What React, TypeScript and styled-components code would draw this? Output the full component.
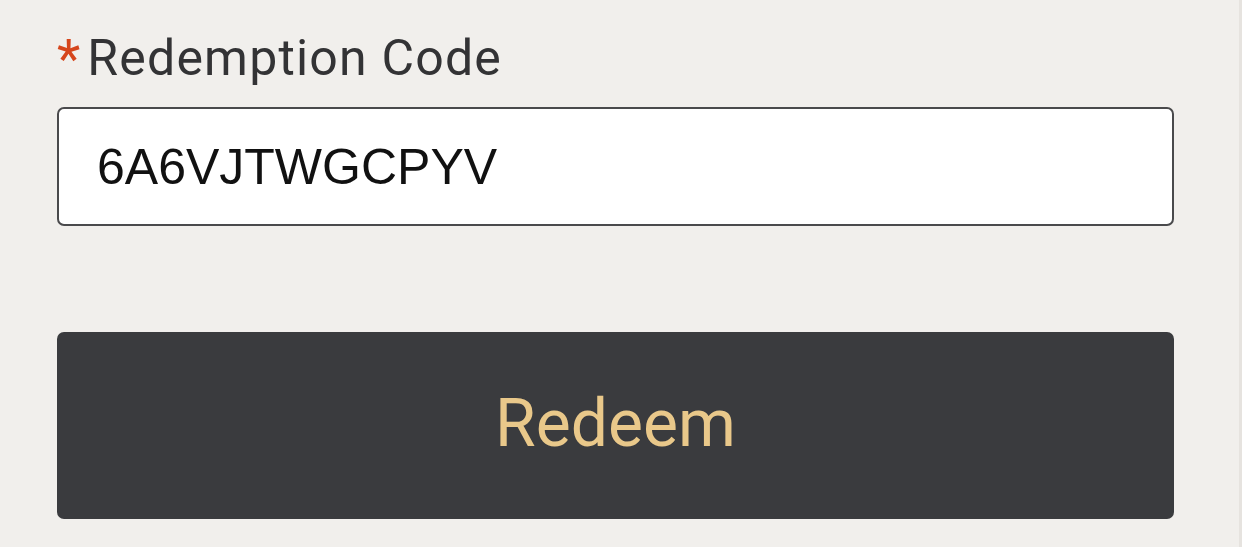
import styled, { createGlobalStyle } from "styled-components";

const GlobalStyle = createGlobalStyle`
  html, body {
    margin: 0;
    padding: 0;
    background: #f1efec;
  }
  body {
    font-family: Roboto, "Noto Sans", sans-serif;
  }
`;

const Page = styled.div`
  width: 1242px;
  height: 547px;
  box-sizing: border-box;
  padding: 27px 65px 0 57px;
  background: #f1efec;
  border-right: 3px solid #e6e3df;
  overflow: hidden;
`;

const Form = styled.form`
  display: flex;
  flex-direction: column;
  width: 1117px;
`;

const Label = styled.label`
  display: flex;
  align-items: flex-start;
  height: 66px;
  margin-bottom: 14px;
  font-size: 50px;
  line-height: 62px;
  color: #333335;
  letter-spacing: 1.2px;
`;

const Required = styled.span`
  color: #d6461c;
  font-size: 54px;
  line-height: 64px;
  margin-right: 7px;
  letter-spacing: 0;
`;

const CodeInput = styled.input`
  box-sizing: border-box;
  width: 100%;
  height: 119px;
  padding: 0 0 0 38px;
  border: 2px solid #4a4a4c;
  border-radius: 7px;
  background: #fff;
  font-family: "Liberation Sans", Arial, sans-serif;
  font-size: 50px;
  color: #111;
  outline: none;
`;

const RedeemButton = styled.button`
  box-sizing: border-box;
  margin-top: 106px;
  width: 100%;
  height: 187px;
  border: none;
  border-radius: 7px;
  background: #3a3b3e;
  color: #e9c88a;
  font-family: Roboto, "Noto Sans", sans-serif;
  font-size: 66px;
  padding-bottom: 6px;
  cursor: pointer;
`;

export default function App() {
  return (
    <>
      <GlobalStyle />
      <Page>
        <Form onSubmit={(e) => e.preventDefault()}>
          <Label htmlFor="code">
            <Required>*</Required>
            Redemption Code
          </Label>
          <CodeInput id="code" defaultValue="6A6VJTWGCPYV" />
          <RedeemButton type="submit">Redeem</RedeemButton>
        </Form>
      </Page>
    </>
  );
}
